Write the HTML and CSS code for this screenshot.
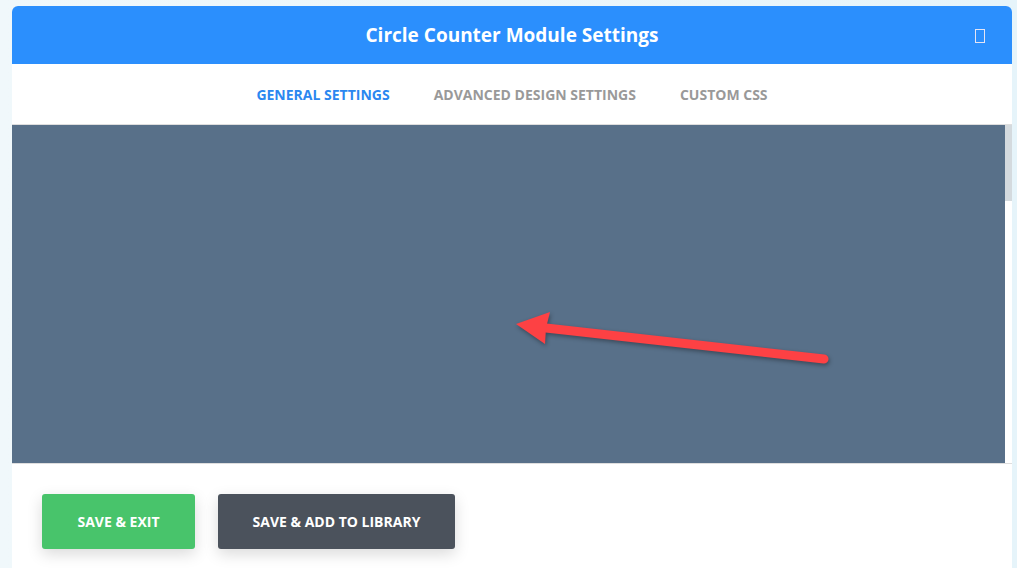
FILE: index.html
```html
<!DOCTYPE html>
<html lang="en">
<head>
    <meta charset="UTF-8">
    <meta name="viewport" content="width=device-width, initial-scale=1.0">
    <title>Circle Counter Module Settings</title>
    <link rel="stylesheet" href="styles.css">
</head>
<body>
    <main class="page">
        <div class="modal">
            <div class="modal-header">
                <h1 class="modal-title">Circle Counter Module Settings</h1>
                <span class="close-box"></span>
            </div>
            <div class="tabs">
                <span class="tab active">General Settings</span>
                <span class="tab">Advanced Design Settings</span>
                <span class="tab">Custom CSS</span>
            </div>
            <div class="content">
                <div class="panel">
                    <!--annotation arrow-->
                    <svg class="arrow" width="993" height="338" viewBox="0 0 993 338">
                        <g fill="#fd4144" stroke="#fd4144" style="filter: drop-shadow(1px 2px 2px rgba(0,0,0,0.35));">
                            <line x1="534" y1="203" x2="812" y2="234" stroke-width="9" stroke-linecap="round"/>
                            <polygon points="504,199 538,187 534,203 533,219" stroke="none"/>
                        </g>
                    </svg>
                </div>
                <div class="scrollbar">
                    <div class="scroll-thumb"></div>
                </div>
            </div>
            <div class="footer">
                <button class="btn btn-save">Save &amp; Exit</button>
                <button class="btn btn-library">Save &amp; Add to Library</button>
            </div>
        </div>
    </main>
</body>
</html>
```

FILE: styles.css
```css
html, body {
    margin: 0;
    height: 100%;
    overflow: hidden;
}
body {
    background: linear-gradient(90deg, #f0f8fb 0%, #e6f4fa 100%);
    font-family: 'Open Sans', sans-serif;
}
.page {
    padding: 6px 0 0 12px;
}
.modal {
    width: 1000px;
    background-color: #fff;
    border-radius: 6px 6px 0 0;
}
.modal-header {
    position: relative;
    height: 58px;
    background-color: #2b8ffd;
    border-radius: 6px 6px 0 0;
    display: flex;
    align-items: center;
    justify-content: center;
}
.modal-title {
    margin: 0;
    color: #fff;
    font-size: 19px;
    font-weight: 700;
}
.close-box {
    position: absolute;
    right: 27px;
    top: 23px;
    width: 8px;
    height: 12px;
    border: 1px solid #e4e4f4;
}
.tabs {
    height: 60px;
    display: flex;
    align-items: center;
    justify-content: center;
    gap: 44px;
    border-bottom: 1px solid #dedede;
}
.tab {
    font-size: 14px;
    font-weight: 700;
    text-transform: uppercase;
    color: #999;
}
.tab.active {
    color: #2b87f0;
}
.content {
    display: flex;
    height: 338px;
}
.panel {
    flex: 1;
    background-color: #587089;
}
.arrow {
    display: block;
}
.scrollbar {
    width: 7px;
    background-color: #fff;
}
.scroll-thumb {
    height: 76px;
    background-color: #d4dade;
}
.footer {
    border-top: 1px solid #dedede;
    padding: 30px 30px 40px;
    display: flex;
    gap: 23px;
}
.btn {
    height: 55px;
    border: none;
    border-radius: 3px;
    color: #fff;
    font-family: 'Open Sans', sans-serif;
    font-size: 14px;
    font-weight: 700;
    text-transform: uppercase;
    box-shadow: 0 5px 15px rgba(0, 0, 0, 0.15);
}
.btn-save {
    width: 153px;
    background-color: #48c46b;
}
.btn-library {
    width: 237px;
    background-color: #4b525c;
}
```
